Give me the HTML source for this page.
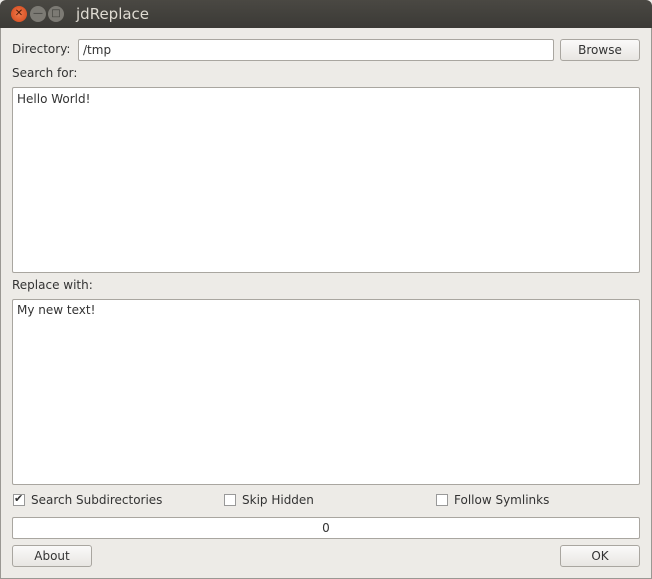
<!DOCTYPE html><html><head><style>
body{margin:0;width:652px;height:579px;overflow:hidden;background:#edebe7;font-family:"DejaVu Sans","Liberation Sans",sans-serif;font-size:12px;color:#333;position:relative}
.t{position:absolute;left:0;top:0;width:652px;height:28px;background:linear-gradient(#4a4843,#3b3a36);border-radius:6px 6px 0 0}
.a{position:absolute}
.f{position:absolute;background:#fff;border:1px solid #a9a6a0;border-radius:2px;box-sizing:border-box}
.b{position:absolute;border:1px solid #a9a6a0;border-radius:3px;box-sizing:border-box;background:linear-gradient(#fafaf9,#e8e6e2);text-align:center;line-height:20px}
.c{position:absolute;width:12px;height:12px;border:1px solid #999;background:#fff;box-sizing:border-box;top:494px}
.w{position:absolute;top:6px;width:16px;height:16px;border-radius:50%;text-align:center;line-height:15px;font-size:10px;color:#3a3a36}
</style></head><body>
<div class="t"></div>
<div class="w" style="left:11px;background:radial-gradient(#f07a4a,#d2461b);color:#4a1a0a">✕</div>
<div class="w" style="left:30px;background:#7c7a74">—</div>
<div class="w" style="left:48px;background:#7c7a74">□</div>
<div class="a" style="left:76px;top:5px;color:#dfdbd2;font-size:15px">jdReplace</div>
<div class="a" style="left:0;top:28px;width:1px;height:551px;background:#9a9893"></div>
<div class="a" style="right:0;top:28px;width:1px;height:551px;background:#9a9893"></div>
<div class="a" style="left:0;bottom:0;width:652px;height:1px;background:#9a9893"></div>
<div class="a" style="left:12px;top:42px">Directory:</div>
<div class="f" style="left:78px;top:39px;width:476px;height:22px;padding:3px 4px">/tmp</div>
<div class="b" style="left:560px;top:39px;width:80px;height:22px">Browse</div>
<div class="a" style="left:12px;top:66px">Search for:</div>
<div class="f" style="left:12px;top:87px;width:628px;height:186px;padding:4px 4px">Hello World!</div>
<div class="a" style="left:12px;top:278px">Replace with:</div>
<div class="f" style="left:12px;top:299px;width:628px;height:186px;padding:3px 4px">My new text!</div>
<div class="c" style="left:13px"></div><div class="a" style="left:14px;top:492px;font-size:11px;font-weight:bold">✔</div>
<div class="a" style="left:31px;top:493px">Search Subdirectories</div>
<div class="c" style="left:224px"></div><div class="a" style="left:242px;top:493px">Skip Hidden</div>
<div class="c" style="left:436px"></div><div class="a" style="left:454px;top:493px">Follow Symlinks</div>
<div class="f" style="left:12px;top:517px;width:628px;height:22px;text-align:center;line-height:20px">0</div>
<div class="b" style="left:12px;top:545px;width:80px;height:22px">About</div>
<div class="b" style="left:560px;top:545px;width:80px;height:22px">OK</div>
</body></html>
